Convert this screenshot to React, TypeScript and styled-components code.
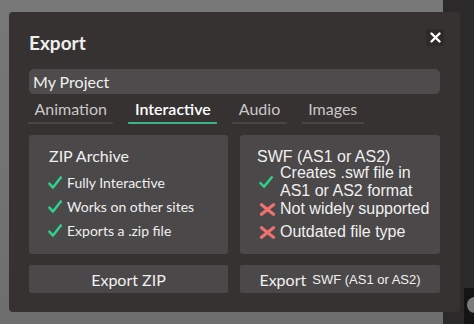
import React from "react";
import styled, { createGlobalStyle } from "styled-components";

const tabs = ["Animation", "Interactive", "Audio", "Images"];

export default function App() {
  const [active, setActive] = React.useState(1);

  return (
    <>
      <GlobalStyle />
      <Backdrop>
        <Stage />
        <SidePane>
          <Knob />
        </SidePane>
      </Backdrop>

      <Modal>
        <Header>
          <Title>Export</Title>
          <CloseButton aria-label="Close">
            <svg width="11" height="11" viewBox="0 0 11 11">
              <path
                d="M1.5 1.5 L9.5 9.5 M9.5 1.5 L1.5 9.5"
                stroke="#fff"
                strokeWidth="2.4"
                strokeLinecap="round"
              />
            </svg>
          </CloseButton>
        </Header>

        <NameInput defaultValue="My Project" />

        <TabRow>
          {tabs.map((t, i) => (
            <Tab key={t} active={i === active} onClick={() => setActive(i)}>
              {t}
            </Tab>
          ))}
        </TabRow>

        <Grid>
          {/* ZIP card */}
          <Card>
            <CardTitle>ZIP Archive</CardTitle>
            <FeatureList>
              <Feature>
                <Check />
                Fully Interactive
              </Feature>
              <Feature>
                <Check />
                Works on other sites
              </Feature>
              <Feature>
                <Check />
                Exports a .zip file
              </Feature>
            </FeatureList>
          </Card>

          {/* SWF card */}
          <Card legacy>
            <CardTitle>SWF (AS1 or AS2)</CardTitle>
            <LegacyList>
              <LegacyItem>
                <Mark>
                  <Check small />
                </Mark>
                <span>
                  Creates .swf file in
                  <br />
                  AS1 or AS2 format
                </span>
              </LegacyItem>
              <LegacyItem>
                <Mark>
                  <Cross />
                </Mark>
                <span>Not widely supported</span>
              </LegacyItem>
              <LegacyItem spaced>
                <Mark>
                  <Cross />
                </Mark>
                <span>Outdated file type</span>
              </LegacyItem>
            </LegacyList>
          </Card>

          <ExportButton>Export ZIP</ExportButton>
          <ExportButton>
            Export<Small>SWF (AS1 or AS2)</Small>
          </ExportButton>
        </Grid>
      </Modal>
    </>
  );
}

function Check({ small }: { small?: boolean }) {
  const h = small ? 12 : 13;
  return (
    <svg width={14} height={h} viewBox="0 0 14 13" preserveAspectRatio="none" style={{ flex: "none" }}>
      <path
        d="M1.4 7.6 L5 11.6 L12.8 1.4"
        fill="none"
        stroke="#2fd08e"
        strokeWidth="2.5"
        strokeLinecap="round"
        strokeLinejoin="round"
      />
    </svg>
  );
}

function Cross() {
  return (
    <svg width="17" height="13" viewBox="0 0 17 13" style={{ flex: "none" }}>
      <path
        d="M2.5 1.8 L14.5 11.2 M14.5 1.8 L2.5 11.2"
        stroke="#f07171"
        strokeWidth="3.2"
        strokeLinecap="round"
      />
    </svg>
  );
}

// SECTION styled - page
const GlobalStyle = createGlobalStyle`
  html, body {
    margin: 0;
    padding: 0;
    width: 474px;
    height: 324px;
    overflow: hidden;
  }
  body {
    font-family: Lato, "Noto Sans", sans-serif;
  }
`;

const Backdrop = styled.div`
  display: flex;
  width: 474px;
  height: 324px;
`;

const Stage = styled.div`
  width: 443px;
  background: linear-gradient(180deg, #787878 0%, #6e6e6e 100%);
`;

const SidePane = styled.div`
  flex: 1;
  position: relative;
  background: #2b2929;
`;

const Knob = styled.div`
  position: absolute;
  left: 21px;
  top: 288px;
  width: 20px;
  height: 36px;
  background: #141414;

  &::after {
    content: "";
    position: absolute;
    left: 3px;
    top: 9px;
    width: 16px;
    height: 16px;
    border-radius: 50%;
    background: #7c7c7c;
  }
`;
// !SECTION styled - page

// SECTION styled - modal
const Modal = styled.div`
  position: absolute;
  left: 9px;
  top: 12px;
  width: 451px;
  height: 300px;
  box-sizing: border-box;
  padding: 19px 20px 0 20px;
  background: #363231;
  border-radius: 4px;
  color: #f2f2f2;
`;

const Header = styled.div`
  display: flex;
  align-items: flex-start;
  justify-content: space-between;
  height: 26px;
`;

const Title = styled.div`
  font-size: 19px;
  line-height: 24px;
  font-weight: 700;
  color: #eeeeee;
`;

const CloseButton = styled.button`
  display: flex;
  align-items: center;
  justify-content: center;
  width: 18px;
  height: 17px;
  padding: 0;
  margin-top: -2px;
  margin-right: -4px;
  border: none;
  border-radius: 2px;
  background: #2d2a29;
  cursor: pointer;
`;

const NameInput = styled.input`
  display: block;
  box-sizing: border-box;
  width: 100%;
  height: 25px;
  margin-top: 12px;
  padding: 0 4px;
  border: none;
  border-radius: 5px;
  outline: none;
  background: #4d4b4b;
  color: #f0f0f0;
  font-family: Lato, "Noto Sans", sans-serif;
  font-size: 16px;
`;

const TabRow = styled.div`
  display: flex;
  gap: 15px;
  margin-left: -1px;
`;

const Tab = styled.div<{ active?: boolean }>`
  padding: 4px 6.5px 2px 6.5px;
  font-size: 16px;
  line-height: 22px;
  color: ${({ active }) => (active ? "#ffffff" : "#c9c7c7")};
  font-weight: ${({ active }) => (active ? 600 : 400)};
  border-bottom: 2px solid ${({ active }) => (active ? "#3db489" : "#484545")};
  border-radius: 1px;
  cursor: pointer;
`;

const Grid = styled.div`
  display: grid;
  grid-template-columns: 199px 200px;
  grid-template-rows: 119px 28px;
  column-gap: 12px;
  row-gap: 11px;
  margin-top: 11px;
`;

const Card = styled.div<{ legacy?: boolean }>`
  box-sizing: border-box;
  padding: ${({ legacy }) => (legacy ? "12px 10px 0 17px" : "11px 10px 0 20px")};
  background: #4a4848;
  border-radius: 3px;
  font-family: ${({ legacy }) =>
    legacy ? '"Liberation Sans", Arial, sans-serif' : 'Lato, "Noto Sans", sans-serif'};
`;

const CardTitle = styled.div`
  font-size: 16px;
  line-height: 20px;
  color: #f0f0f0;
`;

const FeatureList = styled.div`
  display: flex;
  flex-direction: column;
  margin-top: 4px;
`;

const Feature = styled.div`
  display: flex;
  align-items: center;
  gap: 5px;
  height: 24px;
  margin-left: -1px;
  font-size: 14px;
  color: #f0f0f0;
`;

const LegacyList = styled.div`
  display: flex;
  flex-direction: column;
  margin-top: -3px;
`;

const LegacyItem = styled.div<{ spaced?: boolean }>`
  display: flex;
  align-items: center;
  margin-top: ${({ spaced }) => (spaced ? "5px" : "0")};
  font-size: 16px;
  line-height: 18px;
  color: #f0f0f0;
`;

const Mark = styled.span`
  display: flex;
  justify-content: flex-start;
  box-sizing: border-box;
  width: 22px;
  padding-left: 1px;
  margin-left: 1px;
`;

const ExportButton = styled.button`
  display: flex;
  align-items: center;
  justify-content: center;
  gap: 6px;
  padding: 0;
  border: none;
  border-radius: 2px;
  background: #4a4848;
  color: #f0f0f0;
  font-family: Lato, "Noto Sans", sans-serif;
  font-size: 16px;
  cursor: pointer;
`;

const Small = styled.span`
  font-family: "Liberation Sans", Arial, sans-serif;
  font-size: 13px;
`;
// !SECTION styled - modal
